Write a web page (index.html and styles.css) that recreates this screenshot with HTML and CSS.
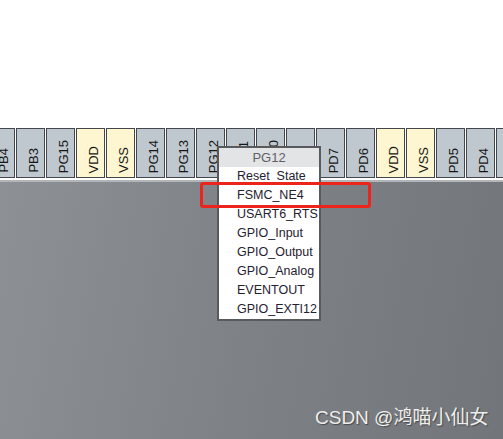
FILE: index.html
```html
<!DOCTYPE html>
<html>
<head>
<meta charset="utf-8">
<link rel="stylesheet" href="styles.css">
</head>
<body>
<div class="page">
  <div class="top"></div>
  <div class="pins">
    <div class="pin"><span>PB4</span></div>
    <div class="pin"><span>PB3</span></div>
    <div class="pin"><span>PG15</span></div>
    <div class="pin power"><span>VDD</span></div>
    <div class="pin power"><span>VSS</span></div>
    <div class="pin"><span>PG14</span></div>
    <div class="pin"><span>PG13</span></div>
    <div class="pin"><span>PG12</span></div>
    <div class="pin"><span>PG11</span></div>
    <div class="pin"><span>PG10</span></div>
    <div class="pin"><span>PG9</span></div>
    <div class="pin"><span>PD7</span></div>
    <div class="pin"><span>PD6</span></div>
    <div class="pin power"><span>VDD</span></div>
    <div class="pin power"><span>VSS</span></div>
    <div class="pin"><span>PD5</span></div>
    <div class="pin"><span>PD4</span></div>
    <div class="pin"><span>PD3</span></div>
  </div>
  <div class="gap"></div>
  <div class="chip"></div>

  <div class="menu">
    <div class="menu-title">PG12</div>
    <div class="menu-item">Reset_State</div>
    <div class="menu-item">FSMC_NE4</div>
    <div class="menu-item">USART6_RTS</div>
    <div class="menu-item">GPIO_Input</div>
    <div class="menu-item">GPIO_Output</div>
    <div class="menu-item">GPIO_Analog</div>
    <div class="menu-item">EVENTOUT</div>
    <div class="menu-item">GPIO_EXTI12</div>
  </div>
  <div class="highlight"></div>
  <div class="watermark">CSDN @鸿喵小仙女</div>
</div>
</body>
</html>
```

FILE: styles.css
```css
html, body {
  margin: 0;
  padding: 0;
}
body {
  width: 503px;
  height: 439px;
  overflow: hidden;
  background: #ffffff;
  font-family: "Liberation Sans", Arial, "Noto Sans CJK SC", sans-serif;
}
.page {
  position: relative;
  width: 503px;
  height: 439px;
  display: flex;
  flex-direction: column;
  overflow: hidden;
}
.top {
  height: 128px;
  flex: none;
}
.pins {
  display: flex;
  gap: 1px;
  margin-left: -14px;
  height: 50px;
  flex: none;
}
.pin {
  box-sizing: border-box;
  width: 29px;
  height: 50px;
  flex: none;
  background: #c0c8cf;
  border: 1px solid #43464a;
  display: flex;
  flex-direction: column;
  justify-content: flex-end;
  align-items: center;
  padding-bottom: 4px;
  overflow: hidden;
}
.pin.power {
  background: #fdf6d0;
}
.pin span {
  writing-mode: vertical-rl;
  transform: rotate(180deg);
  font-size: 13px;
  line-height: 13px;
  color: #151515;
  margin-left: 5px;
}
.gap {
  height: 2px;
  flex: none;
  background: #ffffff;
}
.chip {
  flex: 1;
  border-top: 2px solid #b3b6b9;
  background: linear-gradient(100deg, #8d9196 0%, #7e8287 50%, #72767a 100%);
}
.menu {
  position: absolute;
  left: 217px;
  top: 146px;
  width: 104px;
  box-sizing: border-box;
  border: 2px solid #585a5c;
  background: #ffffff;
}
.menu-title {
  height: 19px;
  line-height: 20px;
  text-align: center;
  background: #e2e4e6;
  color: #5e6266;
  font-size: 13px;
}
.menu-item {
  height: 19px;
  line-height: 19px;
  padding-left: 18px;
  font-size: 12.5px;
  color: #1f2130;
  white-space: nowrap;
}
.highlight {
  position: absolute;
  left: 200px;
  top: 182px;
  width: 171px;
  height: 26px;
  box-sizing: border-box;
  border: 3px solid #ec241c;
  border-radius: 3px;
}
.watermark {
  position: absolute;
  left: 315px;
  top: 406px;
  font-size: 19px;
  line-height: 24px;
  color: #eeeeee;
  text-shadow: 1px 1px 1px rgba(40, 40, 40, 0.6);
  white-space: nowrap;
}
```
